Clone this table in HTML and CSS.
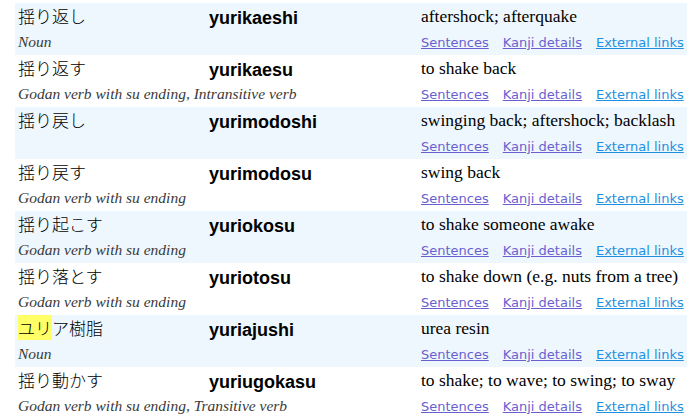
FILE: index.html
```html
<!DOCTYPE html>
<html>
<head>
<meta charset="utf-8">
<link rel="stylesheet" href="styles.css">
</head>
<body>
<div class="list">
  <div class="entry alt">
    <div class="jp">揺り返し</div><div class="ro">yurikaeshi</div><div class="mean">aftershock; afterquake</div>
    <div class="pos">Noun</div>
    <div class="links"><a class="v" href="#">Sentences</a><a class="v" href="#">Kanji details</a><a class="x" href="#">External links</a></div>
  </div>
  <div class="entry">
    <div class="jp">揺り返す</div><div class="ro">yurikaesu</div><div class="mean">to shake back</div>
    <div class="pos">Godan verb with su ending, Intransitive verb</div>
    <div class="links"><a class="v" href="#">Sentences</a><a class="v" href="#">Kanji details</a><a class="x" href="#">External links</a></div>
  </div>
  <div class="entry alt">
    <div class="jp">揺り戻し</div><div class="ro">yurimodoshi</div><div class="mean">swinging back; aftershock; backlash</div>
    <div class="pos"></div>
    <div class="links"><a class="v" href="#">Sentences</a><a class="v" href="#">Kanji details</a><a class="x" href="#">External links</a></div>
  </div>
  <div class="entry">
    <div class="jp">揺り戻す</div><div class="ro">yurimodosu</div><div class="mean">swing back</div>
    <div class="pos">Godan verb with su ending</div>
    <div class="links"><a class="v" href="#">Sentences</a><a class="v" href="#">Kanji details</a><a class="x" href="#">External links</a></div>
  </div>
  <div class="entry alt">
    <div class="jp">揺り起こす</div><div class="ro">yuriokosu</div><div class="mean">to shake someone awake</div>
    <div class="pos">Godan verb with su ending</div>
    <div class="links"><a class="v" href="#">Sentences</a><a class="v" href="#">Kanji details</a><a class="x" href="#">External links</a></div>
  </div>
  <div class="entry">
    <div class="jp">揺り落とす</div><div class="ro">yuriotosu</div><div class="mean">to shake down (e.g. nuts from a tree)</div>
    <div class="pos">Godan verb with su ending</div>
    <div class="links"><a class="v" href="#">Sentences</a><a class="v" href="#">Kanji details</a><a class="x" href="#">External links</a></div>
  </div>
  <div class="entry alt">
    <div class="jp"><span class="hl">ユリ</span>ア樹脂</div><div class="ro">yuriajushi</div><div class="mean">urea resin</div>
    <div class="pos">Noun</div>
    <div class="links"><a class="v" href="#">Sentences</a><a class="v" href="#">Kanji details</a><a class="x" href="#">External links</a></div>
  </div>
  <div class="entry">
    <div class="jp">揺り動かす</div><div class="ro">yuriugokasu</div><div class="mean">to shake; to wave; to swing; to sway</div>
    <div class="pos">Godan verb with su ending, Transitive verb</div>
    <div class="links"><a class="v" href="#">Sentences</a><a class="v" href="#">Kanji details</a><a class="x" href="#">External links</a></div>
  </div>
</div>
</body>
</html>
```
FILE: styles.css
```css
html, body {
  margin: 0;
  padding: 0;
  background: #ffffff;
  overflow: hidden;
}
body {
  padding: 3px 0 0 15px;
}
.list {
  display: flex;
  flex-direction: column;
}
.entry {
  display: grid;
  grid-template-columns: 191px 212px 1fr;
  grid-template-rows: 26px 26px;
  padding-left: 3px;
  height: 52px;
  box-sizing: border-box;
}
.entry.alt {
  background: #eef7fd;
}
.jp {
  font-family: "Noto Sans CJK JP", sans-serif;
  font-weight: 300;
  font-size: 17px;
  line-height: 26px;
  color: #000;
  white-space: nowrap;
}
.hl {
  background: #ffff66;
}
.ro {
  font-family: "Liberation Sans", Arial, sans-serif;
  font-weight: bold;
  font-size: 18px;
  line-height: 26px;
  padding-top: 2px;
  color: #000;
  white-space: nowrap;
}
.mean {
  font-family: "Liberation Serif", "Times New Roman", serif;
  font-size: 17.5px;
  line-height: 26px;
  color: #000;
  white-space: nowrap;
}
.pos {
  grid-column: 1 / 3;
  font-family: "Liberation Serif", "Times New Roman", serif;
  font-style: italic;
  font-size: 15.5px;
  line-height: 26px;
  color: #3a3a3a;
  white-space: nowrap;
}
.links {
  display: flex;
  gap: 14px;
  font-family: "DejaVu Sans", sans-serif;
  font-size: 13px;
  line-height: 26px;
  padding-top: 1px;
  white-space: nowrap;
}
.links a {
  text-decoration: underline;
}
.links a.v {
  color: #6a5fd0;
}
.links a.x {
  color: #1f8fe0;
}
```
